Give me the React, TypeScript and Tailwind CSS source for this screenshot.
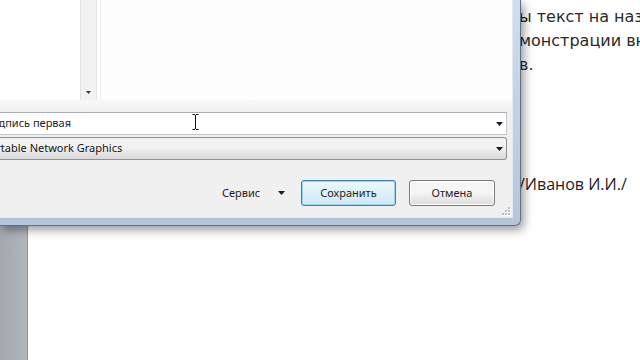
function DropArrow() {
  return (
    <svg width="7" height="4" viewBox="0 0 7 4" className="shrink-0">
      <polygon points="0,0 7,0 3.5,4" fill="#1b1b1b" />
    </svg>
  );
}

function SaveDialog() {
  return (
    <div className="absolute left-0 top-0 h-[226px] w-[521px] rounded-br-[6px] border-b border-r border-[#5f6f84] bg-gradient-to-b from-[#d0ddec] to-[#b5c6da] pb-[7px] pr-[7px] shadow-[3px_4px_10px_rgba(0,0,0,0.4)]">
      <div className="flex h-full flex-col border-b border-r border-[#e4eaf1] bg-[#f0f0f0] text-[11px] text-[#1e1e1e]">
        {/* file list */}
        <div className="flex h-[101px]">
          <div className="w-[80px] bg-white" />
          <div className="flex w-[17px] flex-col items-center justify-end border-x border-[#e3e3e3] bg-[#f2f2f2] pb-[6px]">
            <svg width="5" height="3" viewBox="0 0 5 3">
              <polygon points="0,0 5,0 2.5,3" fill="#3a3a3a" />
            </svg>
          </div>
          <div className="w-[3px] bg-white" />
          <div className="flex-1 border-l border-[#ededed] bg-[#fdfdfd]" />
        </div>
        <div className="h-[12px] bg-gradient-to-b from-[#f9f9f9] to-[#eeeeee]" />

        {/* file name */}
        <div className="relative flex h-[23px] w-[507px] items-center border border-l-0 border-[#c4c7cc] border-t-[#a9adb3] bg-white">
          <span className="-ml-[16px] flex-1 whitespace-nowrap">Подпись первая</span>
          <div className="mr-[3px]">
            <DropArrow />
          </div>
          <svg width="7" height="16" viewBox="0 0 7 16" className="absolute left-[192px] top-[1px]">
            <path d="M0.5 0.5h2.5M4 0.5h2.5M3.5 1v14M0.5 15.5h2.5M4 15.5h2.5" stroke="#111" strokeWidth="1" fill="none" />
          </svg>
        </div>

        {/* file type */}
        <div className="mt-[2px] flex h-[23px] w-[507px] items-center rounded-r-[3px] border border-l-0 border-[#8f9194] bg-gradient-to-b from-[#f3f3f3] from-40% to-[#d9d9d9]">
          <span className="-ml-[17px] flex-1 whitespace-nowrap text-[#151515]">Portable Network Graphics</span>
          <div className="mr-[3px]">
            <DropArrow />
          </div>
        </div>

        {/* buttons */}
        <div className="mt-[20px] flex h-[26px] items-center">
          <div className="flex w-[301px] items-center pl-[222px] pr-[16px]">
            <span>Сервис</span>
            <div className="ml-auto">
              <DropArrow />
            </div>
          </div>
          <button className="flex h-[26px] w-[95px] items-center justify-center rounded-[3px] border border-[#3c7fb1] bg-gradient-to-b from-[#eef7fc] to-[#cfe8f6] shadow-[inset_0_0_0_1px_#98d3f0]">
            Сохранить
          </button>
          <button className="ml-[13px] flex h-[26px] w-[86px] items-center justify-center rounded-[3px] border border-[#7a7a7a] bg-gradient-to-b from-[#f6f6f6] from-45% to-[#dcdcdc] shadow-[inset_0_0_0_1px_#fbfbfb]">
            Отмена
          </button>
        </div>

        {/* resize grip */}
        <div className="flex flex-1 items-end justify-end pb-[1px] pr-[1px]">
          <svg width="10" height="10" viewBox="0 0 10 10">
            {[
              [7, 1],
              [4, 4],
              [7, 4],
              [1, 7],
              [4, 7],
              [7, 7],
            ].map(([x, y]) => (
              <g key={`${x}-${y}`}>
                <rect x={x + 1} y={y + 1} width="2" height="2" fill="#ffffff" />
                <rect x={x} y={y} width="2" height="2" fill="#bcc0c5" />
              </g>
            ))}
          </svg>
        </div>
      </div>
    </div>
  );
}

export default function App() {
  return (
    <div className="relative h-[360px] w-[640px] overflow-hidden bg-white font-['Noto_Sans',sans-serif]">
      {/* document behind the dialog */}
      <div className="flex h-full">
        <div className="w-[28px] shrink-0 border-r border-[#8e949c] bg-gradient-to-r from-[#a3a8b0] to-[#b2b7be]" />
        <div className="min-w-0 flex-1 overflow-hidden whitespace-nowrap bg-white pl-[491px] pt-[5px] font-['DejaVu_Sans',sans-serif] text-[16px] leading-[24px] text-[#2a2a2a]">
          <p>ы текст на назв</p>
          <p>монстрации вн</p>
          <p>в.</p>
          <p className="mt-[95px] font-['Open_Sans',sans-serif] text-[16px] text-[#222]">/Иванов И.И./</p>
        </div>
      </div>
      <SaveDialog />
    </div>
  );
}
